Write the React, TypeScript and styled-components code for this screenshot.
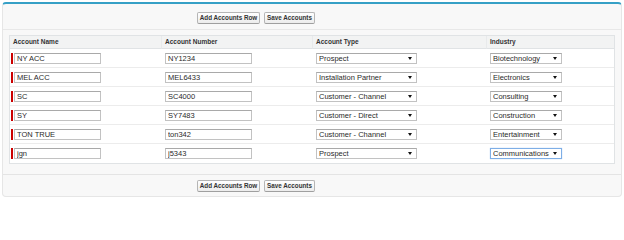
import React from "react";
import styled, { createGlobalStyle } from "styled-components";

const GlobalStyle = createGlobalStyle`
  html, body {
    margin: 0;
    padding: 0;
    background: #ffffff;
    font-family: "Liberation Sans", Arial, sans-serif;
  }
`;

const PageBlock = styled.div`
  box-sizing: border-box;
  width: 620px;
  margin: 2px 0 0 2px;
  background: #f8f8f8;
  border: 1px solid #e6e6e6;
  border-top: 2px solid #36a0c6;
  border-radius: 4px;
`;

const ButtonBar = styled.div<{ $bottom?: boolean }>`
  display: flex;
  gap: 4px;
  box-sizing: border-box;
  padding: ${({ $bottom }) => ($bottom ? "5px 0 4px 194px" : "8px 0 0 194px")};
  height: ${({ $bottom }) => ($bottom ? "22px" : "26px")};
  border-top: ${({ $bottom }) => ($bottom ? "1px solid #e4e4e4" : "none")};
  border-bottom: ${({ $bottom }) => ($bottom ? "none" : "1px solid #e8e8e8")};
`;

const Button = styled.button<{ $w: number }>`
  box-sizing: border-box;
  width: ${({ $w }) => $w}px;
  height: 12px;
  padding: 0;
  border: 1px solid #b5b5b5;
  border-bottom-color: #9f9f9f;
  border-radius: 2px;
  background: linear-gradient(#ffffff, #ececec);
  color: #333;
  font-family: "Liberation Sans", Arial, sans-serif;
  font-weight: bold;
  font-size: 6.3px;
  line-height: 10px;
  text-align: center;
  white-space: nowrap;
`;

const Body = styled.div`
  padding: 5px 6px 10px 6px;
`;

const Table = styled.div`
  box-sizing: border-box;
  width: 606px;
  background: #fff;
  border: 1px solid #e0e3e5;
  display: grid;
  grid-template-columns: 152px 151px 174px 1fr;
`;

const HeadCell = styled.div<{ $first?: boolean }>`
  height: 12px;
  line-height: 12px;
  padding-left: 3px;
  background: #f2f3f3;
  border-bottom: 1px solid #e0e3e5;
  border-left: ${({ $first }) => ($first ? "none" : "1px solid #e8eaeb")};
  margin-left: ${({ $first }) => ($first ? "0" : "-1px")};
  color: #333;
  font-weight: bold;
  font-size: 6.5px;
  white-space: nowrap;
`;

const Cell = styled.div<{ $last?: boolean; $first?: boolean }>`
  display: flex;
  align-items: flex-start;
  box-sizing: border-box;
  height: 19px;
  padding: 4px 0 0 ${({ $first }) => ($first ? "1px" : "3px")};
  border-bottom: ${({ $last }) => ($last ? "none" : "1px solid #ececec")};
`;

const Required = styled.span`
  width: 2px;
  height: 11px;
  background: #c00;
  margin-right: 1px;
`;

const TextInput = styled.input`
  display: block;
  box-sizing: border-box;
  width: 87px;
  height: 11px;
  margin: 0;
  padding: 0 0 0 2px;
  border: 1px solid #c2c2c2;
  border-top-color: #a9a9a9;
  background: #fff;
  color: #2a2a2a;
  font-family: "Liberation Sans", Arial, sans-serif;
  font-size: 7.5px;
  outline: none;
`;

const SelectWrap = styled.div<{ $w: number }>`
  position: relative;
  width: ${({ $w }) => $w}px;
  height: 11px;
`;

const Select = styled.select<{ $focus?: boolean }>`
  display: block;
  appearance: none;
  -webkit-appearance: none;
  box-sizing: border-box;
  width: 100%;
  height: 11px;
  margin: 0;
  padding: 0 0 0 2px;
  border: 1px solid ${({ $focus }) => ($focus ? "#7eaee6" : "#c2c2c2")};
  border-top-color: ${({ $focus }) => ($focus ? "#7eaee6" : "#a9a9a9")};
  box-shadow: ${({ $focus }) => ($focus ? "0 0 1px #a8c8f0" : "none")};
  border-radius: 0;
  background: #fff;
  color: #2a2a2a;
  font-family: "Liberation Sans", Arial, sans-serif;
  font-size: 7.5px;
  line-height: 9px;
  outline: none;
`;

const Arrow = styled.span`
  position: absolute;
  right: 5px;
  top: 4px;
  width: 0;
  height: 0;
  border-left: 2px solid transparent;
  border-right: 2px solid transparent;
  border-top: 3px solid #111;
  pointer-events: none;
`;

type Row = { name: string; num: string; type: string; industry: string };

const rows: Row[] = [
  { name: "NY ACC", num: "NY1234", type: "Prospect", industry: "Biotechnology" },
  { name: "MEL ACC", num: "MEL6433", type: "Installation Partner", industry: "Electronics" },
  { name: "SC", num: "SC4000", type: "Customer - Channel", industry: "Consulting" },
  { name: "SY", num: "SY7483", type: "Customer - Direct", industry: "Construction" },
  { name: "TON TRUE", num: "ton342", type: "Customer - Channel", industry: "Entertainment" },
  { name: "jgn", num: "j5343", type: "Prospect", industry: "Communications" },
];

const Buttons = ({ bottom }: { bottom?: boolean }) => (
  <ButtonBar $bottom={bottom}>
    <Button $w={63}>Add Accounts Row</Button>
    <Button $w={51}>Save Accounts</Button>
  </ButtonBar>
);

const Dropdown = ({ value, w, focus }: { value: string; w: number; focus?: boolean }) => (
  <SelectWrap $w={w}>
    <Select $focus={focus} value={value} onChange={() => {}}>
      <option>{value}</option>
    </Select>
    <Arrow />
  </SelectWrap>
);

export default function App() {
  return (
    <>
      <GlobalStyle />
      <PageBlock>
        <Buttons />
        <Body>
          <Table>
            <HeadCell $first>Account Name</HeadCell>
            <HeadCell>Account Number</HeadCell>
            <HeadCell>Account Type</HeadCell>
            <HeadCell>Industry</HeadCell>
            {rows.map((r, i) => {
              const last = i === rows.length - 1;
              return (
                <React.Fragment key={i}>
                  <Cell $first $last={last}>
                    <Required />
                    <TextInput defaultValue={r.name} />
                  </Cell>
                  <Cell $last={last}>
                    <TextInput defaultValue={r.num} />
                  </Cell>
                  <Cell $last={last}>
                    <Dropdown value={r.type} w={101} />
                  </Cell>
                  <Cell $last={last}>
                    <Dropdown value={r.industry} w={72} focus={last} />
                  </Cell>
                </React.Fragment>
              );
            })}
          </Table>
        </Body>
        <Buttons bottom />
      </PageBlock>
    </>
  );
}
